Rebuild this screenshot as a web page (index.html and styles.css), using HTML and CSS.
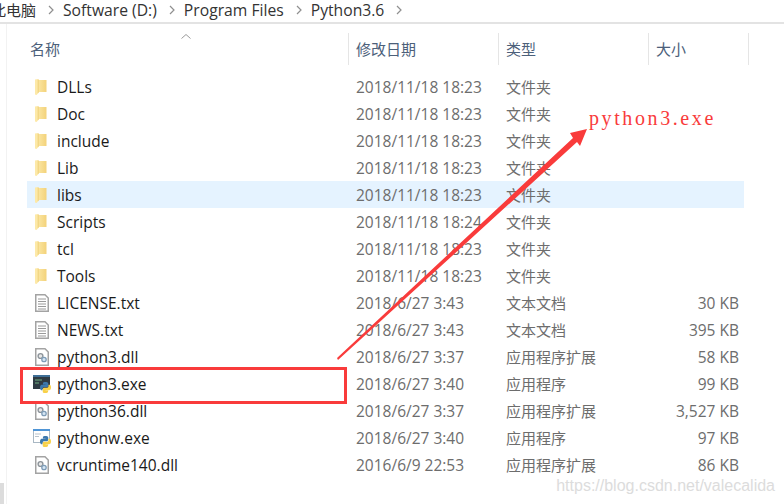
FILE: index.html
```html
<!DOCTYPE html>
<html lang="zh">
<head>
<meta charset="utf-8">
<title>Python3.6</title>
<link rel="stylesheet" href="styles.css">
</head>
<body>
<svg class="defs" width="0" height="0" aria-hidden="true">
  <defs>
    <linearGradient id="fold" x1="0" y1="0" x2="1" y2="0">
      <stop offset="0" stop-color="#fbe6a2"/>
      <stop offset="1" stop-color="#f3d27a"/>
    </linearGradient>
    <symbol id="folder" viewBox="0 0 12 16">
      <path d="M3 1 H11.5 V13 H3 Z" fill="url(#fold)"/>
      <path d="M0 .5 L3.5 0 V13 L3.5 14 L1.5 16 L0 15.5 Z" fill="#fde9a8"/>
      <path d="M3.2 .5 V14" stroke="#e8c566" stroke-width=".7"/>
    </symbol>
    <symbol id="text" viewBox="0 0 14 18">
      <path d="M.75 .75 H10 L13.25 4 V17.25 H.75 Z" fill="#fff" stroke="#a3a3a3" stroke-width="1.5"/>
      <path d="M3 5 H11 M3 7.5 H11 M3 10 H11 M3 12.5 H11 M3 15 H11" stroke="#9a9a9a" stroke-width="1"/>
    </symbol>
    <symbol id="dll" viewBox="0 0 14 18">
      <path d="M.75 .75 H10 L13.25 4 V17.25 H.75 Z" fill="#fff" stroke="#a3a3a3" stroke-width="1.5"/>
      <circle cx="5.5" cy="8" r="2.4" fill="#e8e8e8" stroke="#8d949a" stroke-width="1.4"/>
      <circle cx="9" cy="11.5" r="2.2" fill="#d6e6f4" stroke="#7f9db8" stroke-width="1.3"/>
    </symbol>
    <symbol id="snake" viewBox="0 0 12 12">
      <path d="M5.9 0 C3 0 3.2 1.3 3.2 1.3 V2.6 H6 V3 H2 C2 3 0 2.8 0 5.9 C0 9 1.7 8.9 1.7 8.9 H2.8 V7.4 C2.8 7.4 2.7 5.7 4.5 5.7 H7.4 C7.4 5.7 9 5.7 9 4.1 V1.5 C9 1.5 9.2 0 5.9 0 Z" fill="#3b78ad"/>
      <path transform="rotate(180 6 6)" d="M5.9 0 C3 0 3.2 1.3 3.2 1.3 V2.6 H6 V3 H2 C2 3 0 2.8 0 5.9 C0 9 1.7 8.9 1.7 8.9 H2.8 V7.4 C2.8 7.4 2.7 5.7 4.5 5.7 H7.4 C7.4 5.7 9 5.7 9 4.1 V1.5 C9 1.5 9.2 0 5.9 0 Z" fill="#f8d14a"/>
    </symbol>
  </defs>
</svg>

<div class="window">
  <nav class="crumbs">
    <span class="crumb crumb-first">此电脑</span>
    <svg class="sep" viewBox="0 0 6 10"><path d="M1 1 L5 5 L1 9" fill="none" stroke="#8f8f8f" stroke-width="1.2"/></svg>
    <span class="crumb">Software (D:)</span>
    <svg class="sep" viewBox="0 0 6 10"><path d="M1 1 L5 5 L1 9" fill="none" stroke="#8f8f8f" stroke-width="1.2"/></svg>
    <span class="crumb">Program Files</span>
    <svg class="sep" viewBox="0 0 6 10"><path d="M1 1 L5 5 L1 9" fill="none" stroke="#8f8f8f" stroke-width="1.2"/></svg>
    <span class="crumb">Python3.6</span>
    <svg class="sep" viewBox="0 0 6 10"><path d="M1 1 L5 5 L1 9" fill="none" stroke="#8f8f8f" stroke-width="1.2"/></svg>
  </nav>

  <main class="pane">
    <div class="head">
      <div class="hcell hname">名称<svg class="sort" viewBox="0 0 10 5"><path d="M.5 4.5 L5 .5 L9.5 4.5" fill="none" stroke="#9a9a9a"/></svg></div>
      <div class="hcell">修改日期</div>
      <div class="hcell">类型</div>
      <div class="hcell">大小</div>
    </div>

    <div class="rows">
      <div class="row"><svg class="ico ico-folder"><use href="#folder"/></svg><span class="name">DLLs</span><span>2018/11/18 18:23</span><span class="type">文件夹</span><span class="size"></span></div>
      <div class="row"><svg class="ico ico-folder"><use href="#folder"/></svg><span class="name">Doc</span><span>2018/11/18 18:23</span><span class="type">文件夹</span><span class="size"></span></div>
      <div class="row"><svg class="ico ico-folder"><use href="#folder"/></svg><span class="name">include</span><span>2018/11/18 18:23</span><span class="type">文件夹</span><span class="size"></span></div>
      <div class="row"><svg class="ico ico-folder"><use href="#folder"/></svg><span class="name">Lib</span><span>2018/11/18 18:23</span><span class="type">文件夹</span><span class="size"></span></div>
      <div class="row row-hover"><svg class="ico ico-folder"><use href="#folder"/></svg><span class="name">libs</span><span>2018/11/18 18:23</span><span class="type">文件夹</span><span class="size"></span></div>
      <div class="row"><svg class="ico ico-folder"><use href="#folder"/></svg><span class="name">Scripts</span><span>2018/11/18 18:24</span><span class="type">文件夹</span><span class="size"></span></div>
      <div class="row"><svg class="ico ico-folder"><use href="#folder"/></svg><span class="name">tcl</span><span>2018/11/18 18:23</span><span class="type">文件夹</span><span class="size"></span></div>
      <div class="row"><svg class="ico ico-folder"><use href="#folder"/></svg><span class="name">Tools</span><span>2018/11/18 18:23</span><span class="type">文件夹</span><span class="size"></span></div>
      <div class="row"><svg class="ico ico-doc"><use href="#text"/></svg><span class="name">LICENSE.txt</span><span>2018/6/27 3:43</span><span class="type">文本文档</span><span class="size">30 KB</span></div>
      <div class="row"><svg class="ico ico-doc"><use href="#text"/></svg><span class="name">NEWS.txt</span><span>2018/6/27 3:43</span><span class="type">文本文档</span><span class="size">395 KB</span></div>
      <div class="row"><svg class="ico ico-doc"><use href="#dll"/></svg><span class="name">python3.dll</span><span>2018/6/27 3:37</span><span class="type">应用程序扩展</span><span class="size">58 KB</span></div>
      <div class="row">
        <svg class="ico ico-exe" viewBox="0 0 18 18"><rect width="17" height="14" fill="#2e3a42"/><rect width="17" height="2" fill="#3f6f96"/><path d="M2 5 H9 M2 8 H6" stroke="#6fae7e"/><use href="#snake" x="7" y="7" width="11" height="11"/></svg>
        <span class="name">python3.exe</span><span>2018/6/27 3:40</span><span class="type">应用程序</span><span class="size">99 KB</span>
      </div>
      <div class="row"><svg class="ico ico-doc"><use href="#dll"/></svg><span class="name">python36.dll</span><span>2018/6/27 3:37</span><span class="type">应用程序扩展</span><span class="size">3,527 KB</span></div>
      <div class="row">
        <svg class="ico ico-exe" viewBox="0 0 18 18"><rect x=".5" y=".5" width="16" height="13" fill="#fff" stroke="#a9b8c4"/><rect width="17" height="2" fill="#4f95d6"/><path d="M2 5 H8 M2 7.5 H6" stroke="#b9c3cb"/><use href="#snake" x="7" y="7" width="11" height="11"/></svg>
        <span class="name">pythonw.exe</span><span>2018/6/27 3:40</span><span class="type">应用程序</span><span class="size">97 KB</span>
      </div>
      <div class="row"><svg class="ico ico-doc"><use href="#dll"/></svg><span class="name">vcruntime140.dll</span><span>2016/6/9 22:53</span><span class="type">应用程序扩展</span><span class="size">86 KB</span></div>
    </div>
  </main>

  <div class="thumb"></div>
  <svg class="arrow" viewBox="0 0 784 504" aria-hidden="true">
    <path d="M337 358 L573 138 L570 133 L587 129 L580 146 L577 142 L338 360 Z" fill="#f93b3b"/>
  </svg>
  <div class="callout-box"></div>
  <div class="callout-text">python3.exe</div>
  <div class="watermark">https://blog.csdn.net/valecalida</div>
</div>
</body>
</html>
```

FILE: styles.css
```css
* { box-sizing: border-box; }
html, body { margin: 0; padding: 0; }
body {
  width: 784px;
  height: 504px;
  overflow: hidden;
  background: #fff;
  font-family: "Open Sans", "Noto Sans CJK SC", sans-serif;
}
.defs { position: absolute; }
.window { position: relative; width: 784px; height: 504px; overflow: hidden; }

.crumbs {
  height: 24px;
  border-bottom: 2px solid #e3e3e3;
  display: flex;
  align-items: center;
  overflow: hidden;
  font-size: 15.7px;
  color: #333;
  padding-bottom: 3px;
}
.crumb { white-space: nowrap; }
.crumb-first { margin-left: -9px; font-size: 15px; font-family: "Noto Sans CJK SC", sans-serif; flex: none; }
.sep { width: 6px; height: 10px; margin: 0 9px 0 12px; flex: none; }

.pane {
  margin-left: 6px;
  border-left: 1px solid #f2f2f2;
  height: 480px;
  padding-top: 9px;
}
.head {
  display: grid;
  grid-template-columns: 342px 150px 150px 100px;
  height: 32px;
  font-size: 15px;
  color: #4c607a;
  font-family: "Noto Sans CJK SC", sans-serif;
}
.hcell {
  position: relative;
  border-right: 1px solid #e5e5e5;
  padding-left: 7px;
  line-height: 31px;
}
.hname { padding-left: 23px; }
.sort { position: absolute; left: 174px; top: 1px; width: 10px; height: 5px; }

.rows { margin: 8px 0 0 20px; width: 717px; }
.row {
  display: grid;
  grid-template-columns: 30px 299px 150px 150px 88px;
  height: 27px;
  align-items: center;
  font-size: 15.5px;
  color: #6d6d6d;
  white-space: nowrap;
}
.row-hover { background: #e5f3ff; }
.ico { display: block; }
.ico-folder { width: 12px; height: 16px; margin-left: 8px; }
.ico-doc { width: 14px; height: 18px; margin-left: 8px; }
.ico-exe { width: 18px; height: 18px; margin-left: 6px; }
.name { color: #1a1a1a; }
.type { font-size: 15px; font-family: "Noto Sans CJK SC", sans-serif; }
.size { text-align: right; padding-right: 5px; }

.thumb {
  position: absolute;
  left: 0; top: 483px;
  width: 4px; height: 21px;
  background: #dcdcdc;
}
.arrow { position: absolute; inset: 0; width: 784px; height: 504px; }
.callout-box {
  position: absolute;
  left: 20px; top: 367px;
  width: 327px; height: 37px;
  border: 3px solid #f93b3b;
}
.callout-text {
  position: absolute;
  left: 589px; top: 105px;
  font-family: "Liberation Serif", serif;
  font-size: 20px;
  letter-spacing: 2.6px;
  line-height: 26px;
  color: #f93b3b;
}
.watermark {
  position: absolute;
  right: 9px; top: 476px;
  font-family: "Liberation Sans", sans-serif;
  font-size: 16px;
  line-height: 20px;
  color: #dcdcdc;
}
```
